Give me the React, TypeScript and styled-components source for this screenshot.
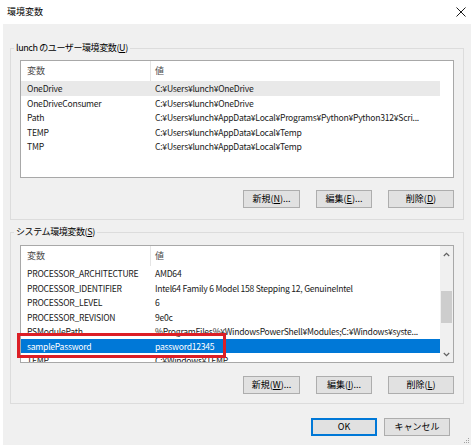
import React from "react";
import styled, { createGlobalStyle } from "styled-components";

const Global = createGlobalStyle`
  html, body { margin: 0; padding: 0; background: #ffffff; }
  body { font-family: "Noto Sans CJK JP", "Noto Sans", sans-serif; }
  #root { width: 474px; height: 448px; }
`;

const FONT = `"Noto Sans CJK JP", "Noto Sans", sans-serif`;

const Window = styled.div`
  width: 474px;
  height: 448px;
  background: #ffffff;
  display: flex;
  flex-direction: column;
  font-family: ${FONT};
  font-size: 9px;
  color: #000;
  overflow: hidden;
`;

const TitleBar = styled.div`
  height: 24px;
  flex: none;
  display: flex;
  align-items: center;
  justify-content: space-between;
  padding: 0 8px 0 7px;
  font-size: 9px;
  line-height: 24px;
`;

const Title = styled.span`
  color: #000;
`;

const CloseIcon = styled.svg`
  width: 10px;
  height: 10px;
  display: block;
`;

const Body = styled.div`
  position: relative;
  flex: none;
  height: 421px;
  margin: 0 3px;
  background: #f0f0f0;
  padding: 16px 7px 9px;
  box-sizing: border-box;
  display: flex;
  flex-direction: column;
`;

const Group = styled.fieldset<{ $top: number; $bottom: number; $gap: number }>`
  margin: ${(p) => p.$gap}px 0 0;
  min-width: 0;
  border: 1px solid #dcdcdc;
  padding: ${(p) => p.$top}px 9px ${(p) => p.$bottom}px;
  display: flex;
  flex-direction: column;
`;

const Legend = styled.legend`
  margin-left: -6px;
  padding: 0 2px;
  font-size: 9px;
  letter-spacing: -0.4px;
  line-height: 16px;
  height: 16px;
  color: #000;
`;

const ListWrap = styled.div`
  position: relative;
`;

const List = styled.div`
  height: 118px;
  box-sizing: border-box;
  border: 1px solid #a8a8a8;
  background: #ffffff;
  display: flex;
  overflow: hidden;
`;

const Columns = styled.div`
  width: 419px;
  flex: none;
  display: flex;
  flex-direction: column;
`;

const Header = styled.div`
  height: 20px;
  flex: none;
  display: grid;
  grid-template-columns: 129px 1fr;
  align-items: center;
  color: #4a4a4a;
`;

const HeaderCell = styled.div<{ $divider?: boolean }>`
  height: 20px;
  line-height: 20px;
  padding-left: ${(p) => (p.$divider ? 4 : 6)}px;
  border-left: ${(p) => (p.$divider ? "1px solid #e5e5e5" : "none")};
`;

const Row = styled.div<{ $state?: "hover" | "selected" }>`
  height: 14.5px;
  flex: none;
  display: grid;
  grid-template-columns: 129px 1fr;
  font-size: 8.6px;
  letter-spacing: -0.25px;
  line-height: 14.5px;
  white-space: nowrap;
  background: ${(p) =>
    p.$state === "selected" ? "#0078d7" : p.$state === "hover" ? "#e9e9e9" : "transparent"};
  color: ${(p) => (p.$state === "selected" ? "#ffffff" : "#1a1a1a")};
`;

const Cell = styled.div<{ $second?: boolean }>`
  overflow: hidden;
  padding-left: ${(p) => (p.$second ? 5 : 6)}px;
`;

const ScrollBar = styled.div`
  margin-left: auto;
  width: 13px;
  flex: none;
  background: #f0f0f0;
  display: flex;
  flex-direction: column;
`;

const ArrowBtn = styled.div`
  height: 16px;
  flex: none;
  display: flex;
  align-items: center;
  justify-content: center;
`;

const Track = styled.div`
  flex: 1;
  display: flex;
  flex-direction: column;
`;

const Thumb = styled.div<{ $offset: number; $size: number }>`
  margin: ${(p) => p.$offset}px 1px 0;
  height: ${(p) => p.$size}px;
  background: #cdcdcd;
`;

const Highlight = styled.div`
  position: absolute;
  left: -3px;
  top: 88px;
  width: 209px;
  height: 25px;
  box-sizing: border-box;
  border: 3px solid #dc1f26;
  pointer-events: none;
`;

const ButtonRow = styled.div<{ $gap: number }>`
  margin-top: ${(p) => p.$gap}px;
  display: flex;
  justify-content: flex-end;
  gap: 16px;
`;

const Button = styled.button<{ $w: number; $default?: boolean }>`
  width: ${(p) => p.$w}px;
  height: 18px;
  box-sizing: border-box;
  padding: 0;
  margin: 0;
  background: #e1e1e1;
  border: ${(p) => (p.$default ? "2px solid #0078d7" : "1px solid #adadad")};
  font-family: ${FONT};
  font-size: 9px;
  line-height: 14px;
  color: #000;
  display: flex;
  align-items: center;
  justify-content: center;
  cursor: default;

  u {
    text-decoration: underline;
    text-underline-offset: 1px;
  }
`;

const Footer = styled.div`
  margin-top: 14px;
  padding-right: 14px;
  display: flex;
  justify-content: flex-end;
  gap: 7px;
`;

const Grip = styled.svg`
  position: absolute;
  right: 0;
  bottom: 0;
  width: 10px;
  height: 10px;
`;

const Chevron = ({ up }: { up?: boolean }) => (
  <svg width="7" height="5" viewBox="0 0 7 5">
    <path
      d={up ? "M0.8 4 L3.5 1.3 L6.2 4" : "M0.8 1 L3.5 3.7 L6.2 1"}
      fill="none"
      stroke="#606060"
      strokeWidth="1.2"
    />
  </svg>
);

type Item = { name: string; value: string; state?: "hover" | "selected" };

const userVars: Item[] = [
  { name: "OneDrive", value: "C:¥Users¥lunch¥OneDrive", state: "hover" },
  { name: "OneDriveConsumer", value: "C:¥Users¥lunch¥OneDrive" },
  { name: "Path", value: "C:¥Users¥lunch¥AppData¥Local¥Programs¥Python¥Python312¥Scri..." },
  { name: "TEMP", value: "C:¥Users¥lunch¥AppData¥Local¥Temp" },
  { name: "TMP", value: "C:¥Users¥lunch¥AppData¥Local¥Temp" },
];

const sysVars: Item[] = [
  { name: "PROCESSOR_ARCHITECTURE", value: "AMD64" },
  { name: "PROCESSOR_IDENTIFIER", value: "Intel64 Family 6 Model 158 Stepping 12, GenuineIntel" },
  { name: "PROCESSOR_LEVEL", value: "6" },
  { name: "PROCESSOR_REVISION", value: "9e0c" },
  { name: "PSModulePath", value: "%ProgramFiles%¥WindowsPowerShell¥Modules;C:¥Windows¥syste..." },
  { name: "samplePassword", value: "password12345", state: "selected" },
  { name: "TEMP", value: "C:¥Windows¥TEMP" },
];

const VarList = ({ items, scroll }: { items: Item[]; scroll?: boolean }) => (
  <List>
    <Columns>
      <Header>
        <HeaderCell>変数</HeaderCell>
        <HeaderCell $divider>値</HeaderCell>
      </Header>
      {items.map((it, i) => (
        <Row key={i} $state={it.state}>
          <Cell>{it.name}</Cell>
          <Cell $second>{it.value}</Cell>
        </Row>
      ))}
    </Columns>
    {scroll && (
      <ScrollBar>
        <ArrowBtn>
          <Chevron up />
        </ArrowBtn>
        <Track>
          <Thumb $offset={29} $size={32} />
        </Track>
        <ArrowBtn>
          <Chevron />
        </ArrowBtn>
      </ScrollBar>
    )}
  </List>
);

export default function App() {
  return (
    <>
      <Global />
      <Window>
        <TitleBar>
          <Title>環境変数</Title>
          <CloseIcon viewBox="0 0 10 10">
            <path d="M0.5 0.5 L9.5 9.5 M9.5 0.5 L0.5 9.5" stroke="#000" strokeWidth="0.9" />
          </CloseIcon>
        </TitleBar>
        <Body>
          <Group $top={4} $bottom={11} $gap={0}>
            <Legend>
              lunch のユーザー環境変数(<u>U</u>)
            </Legend>
            <ListWrap>
              <VarList items={userVars} />
            </ListWrap>
            <ButtonRow $gap={12}>
              <Button $w={57}>
                新規(<u>N</u>)...
              </Button>
              <Button $w={56}>
                編集(<u>E</u>)...
              </Button>
              <Button $w={66}>
                削除(<u>D</u>)
              </Button>
            </ButtonRow>
          </Group>
          <Group $top={5} $bottom={9} $gap={4}>
            <Legend>
              システム環境変数(<u>S</u>)
            </Legend>
            <ListWrap>
              <VarList items={sysVars} scroll />
              <Highlight />
            </ListWrap>
            <ButtonRow $gap={13}>
              <Button $w={57}>
                新規(<u>W</u>)...
              </Button>
              <Button $w={56}>
                編集(<u>I</u>)...
              </Button>
              <Button $w={66}>
                削除(<u>L</u>)
              </Button>
            </ButtonRow>
          </Group>
          <Footer>
            <Button $w={66} $default>
              OK
            </Button>
            <Button $w={66}>キャンセル</Button>
          </Footer>
          <Grip viewBox="0 0 10 10">
            <rect x="7" y="3" width="1" height="1" fill="#a0a0a0" />
            <rect x="5" y="5" width="1" height="1" fill="#a0a0a0" />
            <rect x="7" y="5" width="1" height="1" fill="#a0a0a0" />
            <rect x="3" y="7" width="1" height="1" fill="#a0a0a0" />
            <rect x="5" y="7" width="1" height="1" fill="#a0a0a0" />
            <rect x="7" y="7" width="1" height="1" fill="#a0a0a0" />
          </Grip>
        </Body>
      </Window>
    </>
  );
}
